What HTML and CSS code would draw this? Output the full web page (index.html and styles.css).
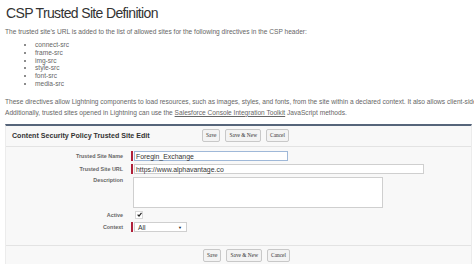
FILE: index.html
```html
<!DOCTYPE html>
<html>
<head>
<meta charset="utf-8">
<link rel="stylesheet" href="styles.css">
</head>
<body>
<div class="page">
  <h1 class="title">CSP Trusted Site Definition</h1>
  <p class="txt intro">The trusted site’s URL is added to the list of allowed sites for the following directives in the CSP header:</p>
  <ul class="dirs">
    <li>connect-src</li>
    <li>frame-src</li>
    <li>img-src</li>
    <li>style-src</li>
    <li>font-src</li>
    <li>media-src</li>
  </ul>
  <p class="txt p2">These directives allow Lightning components to load resources, such as images, styles, and fonts, from the site within a declared context. It also allows client-side code to make requests to the site.</p>
  <p class="txt p3">Additionally, trusted sites opened in Lightning can use the <a class="lnk">Salesforce Console Integration Toolkit</a> JavaScript methods.</p>

  <div class="panel">
    <div class="phead">
      <div class="ptitle">Content Security Policy Trusted Site Edit</div>
      <div class="btns">
        <span class="btn">Save</span>
        <span class="btn">Save &amp; New</span>
        <span class="btn">Cancel</span>
      </div>
    </div>
    <div class="form">
      <div class="row">
        <label class="lbl">Trusted Site Name</label>
        <div class="req"><span class="bar"></span><div class="inp name">Foregin_Exchange</div></div>
      </div>
      <div class="row">
        <label class="lbl">Trusted Site URL</label>
        <div class="req"><span class="bar"></span><div class="inp url">https://www.alphavantage.co</div></div>
      </div>
      <div class="row row-desc">
        <label class="lbl">Description</label>
        <div class="ta"></div>
      </div>
      <div class="row row-active">
        <label class="lbl">Active</label>
        <span class="chk"><svg width="5" height="5" viewBox="0 0 5 5"><path d="M0.6 2.6 L2 4 L4.5 0.8" fill="none" stroke="#222" stroke-width="1.2"/></svg></span>
      </div>
      <div class="row">
        <label class="lbl">Context</label>
        <div class="req"><span class="bar"></span><div class="sel">All<span class="arr">▼</span></div></div>
      </div>
    </div>
    <div class="pfoot">
      <div class="btns">
        <span class="btn">Save</span>
        <span class="btn">Save &amp; New</span>
        <span class="btn">Cancel</span>
      </div>
    </div>
  </div>
</div>
</body>
</html>
```
FILE: styles.css
```css
html, body {
  margin: 0;
  padding: 0;
  background: #ffffff;
  overflow: hidden;
}
.page {
  width: 474px;
  height: 265px;
  overflow: hidden;
  font-family: "Liberation Sans", Arial, sans-serif;
  color: #555;
}
.title {
  margin: 0;
  padding: 5px 0 0 6px;
  font-size: 14px;
  letter-spacing: -0.65px;
  font-weight: normal;
  color: #333;
  line-height: 16px;
  height: 17px;
  white-space: nowrap;
}
.txt {
  margin: 0;
  padding-left: 5px;
  font-size: 6.6px;
  line-height: 8px;
  white-space: nowrap;
  color: #666;
}
.intro {
  margin-top: 6px;
}
.dirs {
  margin: 5px 0 0 0;
  padding-left: 35px;
  font-size: 6.6px;
  line-height: 7.8px;
  color: #666;
}
.p2 {
  margin-top: 10px;
}
.p3 {
  margin-top: 3px;
}
.lnk {
  color: #666;
  text-decoration: underline;
}
.panel {
  margin: 7px 0 0 5px;
  width: 467px;
  height: 140px;
  background: #f8f8f8;
  border-top: 2px solid #56657a;
  border-left: 1px solid #ececec;
  border-right: 1px solid #ececec;
  box-sizing: border-box;
}
.phead {
  display: flex;
  align-items: center;
  height: 20px;
  border-bottom: 1px solid #e3e3e3;
}
.ptitle {
  width: 190px;
  padding-left: 6px;
  font-size: 7.1px;
  font-weight: bold;
  color: #333;
  white-space: nowrap;
}
.btns {
  display: flex;
  gap: 5px;
}
.btn {
  font-family: "Liberation Serif", "Times New Roman", serif;
  font-size: 5.4px;
  color: #333;
  background: #f3f3f3;
  border: 1px solid #c8c8c8;
  border-radius: 2px;
  padding: 0 3px;
  height: 11px;
  line-height: 11px;
  white-space: nowrap;
}
.form {
  padding-top: 4px;
  height: 98px;
  box-sizing: border-box;
}
.row {
  display: flex;
  align-items: center;
  margin-bottom: 3px;
}
.lbl {
  width: 117px;
  text-align: right;
  font-size: 5.4px;
  font-weight: bold;
  color: #666;
  margin-right: 8px;
  white-space: nowrap;
}
.req {
  display: flex;
  align-items: stretch;
}
.bar {
  width: 2px;
  background: #b0203a;
  margin-right: 1px;
}
.inp {
  height: 10px;
  line-height: 10px;
  background: #fff;
  border: 1px solid #cfcfcf;
  box-sizing: border-box;
  font-size: 6.9px;
  color: #333;
  padding-left: 1px;
  white-space: nowrap;
}
.inp.name {
  width: 154px;
  border-color: #9fb8d8;
}
.inp.url {
  width: 290px;
}
.row-desc {
  align-items: flex-start;
}
.ta {
  width: 250px;
  height: 31px;
  margin-left: 2px;
  background: #fff;
  border: 1px solid #cfcfcf;
  box-sizing: border-box;
}
.row-active {
  margin-top: 3px;
  margin-bottom: 3px;
}
.chk {
  display: flex;
  align-items: center;
  justify-content: center;
  width: 6px;
  height: 6px;
  margin-left: 4px;
  background: #fff;
  border: 1px solid #d8d8d8;
}
.sel {
  width: 53px;
  height: 10px;
  line-height: 10px;
  background: #fff;
  border: 1px solid #cfcfcf;
  box-sizing: border-box;
  font-size: 6.8px;
  color: #333;
  padding-left: 3px;
  display: flex;
  justify-content: space-between;
  padding-right: 4px;
}
.arr {
  font-size: 4px;
  color: #222;
}
.pfoot {
  border-top: 1px solid #e3e3e3;
  padding: 3px 0 0 197px;
}
```
